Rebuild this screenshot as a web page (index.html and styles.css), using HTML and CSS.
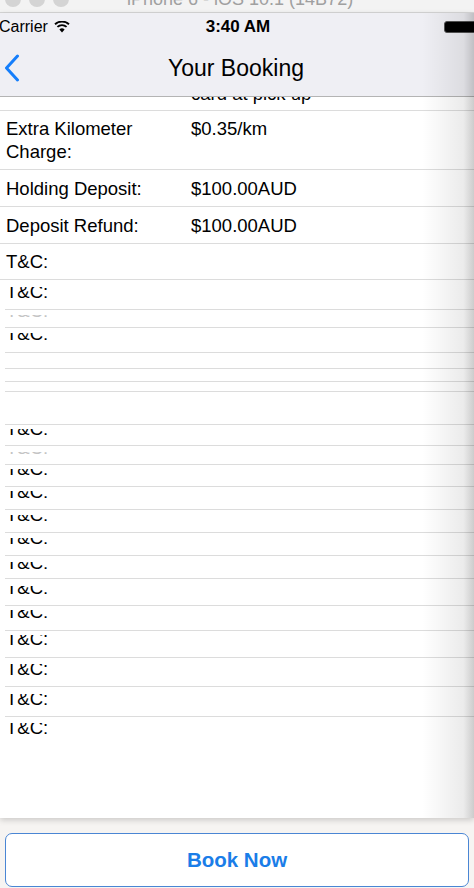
FILE: index.html
```html
<!DOCTYPE html>
<html lang="en">
<head>
    <meta charset="UTF-8">
    <meta name="viewport" content="width=device-width, initial-scale=1.0">
    <title>Your Booking</title>
    <link rel="stylesheet" href="styles.css">
</head>
<body>
    <div class="device">
        <div class="sim-bar">
            <span class="lights"><i></i><i></i><i></i></span>
            <span class="sim-title">iPhone 6 - iOS 10.1 (14B72)</span>
        </div>

        <div class="screen">
            <div class="status-bar">
                <div class="carrier">
                    Carrier
                    <svg class="wifi" width="16" height="12" viewBox="0 0 16 12">
                        <path d="M8 11.6 L5.4 8.5 A3.9 3.9 0 0 1 10.6 8.5 Z" fill="#000"/>
                        <path d="M3.4 5.9 A7 7 0 0 1 12.6 5.9" stroke="#000" stroke-width="1.9" fill="none"/>
                        <path d="M1 3.2 A10.6 10.6 0 0 1 15 3.2" stroke="#000" stroke-width="1.9" fill="none"/>
                    </svg>
                </div>
                <div class="clock">3:40 AM</div>
                <div class="battery"></div>
            </div>

            <header class="nav-bar">
                <svg class="back" width="16" height="28" viewBox="0 0 16 28">
                    <path d="M13.5 2 L2.5 14 L13.5 26" stroke="#157efb" stroke-width="3" fill="none" stroke-linecap="round" stroke-linejoin="round"/>
                </svg>
                <h1>Your Booking</h1>
            </header>

            <div class="table">
                <div class="row info g1">
                    <span></span>
                    <div class="clip"><span>card at pick up</span></div>
                </div>
                <div class="row info tall">
                    <span class="label">Extra Kilometer Charge:</span>
                    <span class="value">$0.35/km</span>
                </div>
                <div class="row info">
                    <span class="label">Holding Deposit:</span>
                    <span class="value">$100.00AUD</span>
                </div>
                <div class="row info">
                    <span class="label">Deposit Refund:</span>
                    <span class="value">$100.00AUD</span>
                </div>
                <div class="row info">
                    <span class="label">T&amp;C:</span>
                    <span></span>
                </div>

                <!-- redraw leftovers: only slices of the T&C rows got painted -->
                <div class="row ghost g6"><div class="clip"><span>T&amp;C:</span></div></div>
                <div class="row ghost faint g7"><div class="clip"><span>T&amp;C:</span></div></div>
                <div class="row ghost g8"><div class="clip"><span>T&amp;C:</span></div></div>
                <div class="row ghost"></div>
                <div class="row ghost"></div>
                <div class="row ghost"></div>
                <div class="row ghost"></div>
                <div class="row ghost g13"><div class="clip"><span>T&amp;C:</span></div></div>
                <div class="row ghost faint g14"><div class="clip"><span>T&amp;C:</span></div></div>
                <div class="row ghost g15"><div class="clip"><span>T&amp;C:</span></div></div>
                <div class="row ghost g16"><div class="clip"><span>T&amp;C:</span></div></div>
                <div class="row ghost g17"><div class="clip"><span>T&amp;C:</span></div></div>
                <div class="row ghost g18"><div class="clip"><span>T&amp;C:</span></div></div>
                <div class="row ghost g19"><div class="clip"><span>T&amp;C:</span></div></div>
                <div class="row ghost g20"><div class="clip"><span>T&amp;C:</span></div></div>
                <div class="row ghost g21"><div class="clip"><span>T&amp;C:</span></div></div>
                <div class="row ghost g22"><div class="clip"><span>T&amp;C:</span></div></div>
                <div class="row ghost g23"><div class="clip"><span>T&amp;C:</span></div></div>
                <div class="row ghost g24"><div class="clip"><span>T&amp;C:</span></div></div>
                <div class="row ghost last g25"><div class="clip"><span>T&amp;C:</span></div></div>
            </div>
        </div>

        <footer class="footer">
            <button class="book-btn">Book Now</button>
        </footer>
    </div>
</body>
</html>
```

FILE: styles.css
```css
* {
    margin: 0;
    padding: 0;
    box-sizing: border-box;
}

body {
    font-family: 'Liberation Sans', Arial, sans-serif;
    background: #f6f4f2;
    color: #000;
}

.device {
    width: 474px;
    height: 888px;
    overflow: hidden;
    display: flex;
    flex-direction: column;
}

/* simulator window chrome, mostly scrolled off the top */
.sim-bar {
    height: 13px;
    flex-shrink: 0;
    background: #f3f3f3;
    border-bottom: 1px solid #d6d6d6;
    overflow: hidden;
    display: flex;
    align-items: flex-start;
}

.lights {
    display: flex;
    gap: 8px;
    padding-left: 5px;
    margin-top: -9px;
}

.lights i {
    display: block;
    width: 16px;
    height: 16px;
    border-radius: 50%;
    background: #d4d4d4;
}

.sim-title {
    margin-left: 58px;
    margin-top: -11px;
    font-size: 18px;
    line-height: 20px;
    color: #a0a0a0;
}

.screen {
    position: relative;
    height: 805px;
    flex-shrink: 0;
    display: flex;
    flex-direction: column;
    background: #fff;
    box-shadow: 0 2px 6px rgba(0, 0, 0, 0.18);
    z-index: 1;
}

/* page-transition shadow on the right edge */
.screen::after {
    content: '';
    position: absolute;
    top: 0;
    right: 0;
    bottom: 0;
    width: 52px;
    background: linear-gradient(to right, rgba(0, 0, 0, 0), rgba(0, 0, 0, 0.08) 80%, rgba(0, 0, 0, 0.2));
    pointer-events: none;
}

.status-bar {
    height: 27px;
    flex-shrink: 0;
    background: #efeff4;
    display: grid;
    grid-template-columns: 1fr auto 1fr;
    align-items: center;
    overflow: hidden;
}

.carrier {
    display: flex;
    align-items: center;
    gap: 6px;
    font-size: 16px;
    margin-left: -1px;
}

.clock {
    font-size: 17px;
    font-weight: bold;
    margin-left: 2px;
}

.battery {
    justify-self: end;
    width: 38px;
    height: 12px;
    margin-right: -8px;
    border-radius: 3px;
    background: #000;
    border: 1px solid #555;
}

.nav-bar {
    height: 57px;
    flex-shrink: 0;
    background: #efeff4;
    border-bottom: 1px solid #b4b4b4;
    display: grid;
    grid-template-columns: 40px 1fr 40px;
    align-items: center;
}

.nav-bar .back {
    margin-left: 4px;
}

.nav-bar h1 {
    font-size: 23px;
    font-weight: normal;
    text-align: center;
    margin-left: -2px;
}

.table {
    flex: 1;
    display: grid;
    grid-template-rows: 14px 59px 37px 37px 36px 30px 18px 25px 16px 13px 10px 33px 21px 19px 22px 23px 23px 23px 23px 27px 25px 27px 29px 30px 1fr;
    font-size: 18.5px;
}

.row {
    border-bottom: 1px solid #dcdcdc;
    overflow: hidden;
}

.row.info {
    display: grid;
    grid-template-columns: 185px 1fr;
    align-items: center;
    padding-left: 6px;
}

.row.info.tall {
    align-items: start;
    padding-top: 6px;
}

.row.ghost {
    margin-left: 5px;
    padding-left: 1px;
}

.row.last {
    border-bottom: none;
}

.label {
    line-height: 23px;
    padding-right: 10px;
}

.value {
    line-height: 23px;
}

/* a slice of a line of text: --top is where it starts, --show how much of it is left */
.clip {
    overflow: hidden;
    margin-top: var(--top, 0);
    height: var(--show, 19px);
    align-self: start;
}

.clip span {
    display: block;
    line-height: 19px;
    white-space: nowrap;
    margin-top: var(--shift, calc(var(--show, 19px) - 16px));
}

.faint .clip span {
    color: #c4c4c4;
}

.g1 { --top: 0px; --show: 7px; --shift: -13px; }
.g6 { --top: 7px; --show: 11px; }
.g7 { --top: 5px; --show: 2px; }
.g8 { --top: 5px; --show: 7px; }
.g13 { --top: 4px; --show: 6px; }
.g14 { --top: 6px; --show: 2px; }
.g15 { --top: 4px; --show: 6px; }
.g16 { --top: 4px; --show: 7px; }
.g17 { --top: 5px; --show: 6px; }
.g18 { --top: 5px; --show: 6px; }
.g19 { --top: 6px; --show: 7px; }
.g20 { --top: 7px; --show: 8px; }
.g21 { --top: 4px; --show: 8px; }
.g22 { --top: 4px; --show: 10px; }
.g23 { --top: 6px; --show: 11px; }
.g24 { --top: 7px; --show: 11px; }
.g25 { --top: 6px; --show: 11px; }

.footer {
    flex: 1;
    padding: 15px 5px 0;
}

.book-btn {
    width: 464px;
    height: 54px;
    border: 1.5px solid #4a86d4;
    border-radius: 7px;
    background: #fff;
    color: #1a7de8;
    font-family: 'Liberation Sans', Arial, sans-serif;
    font-size: 20.5px;
    font-weight: bold;
}
```
